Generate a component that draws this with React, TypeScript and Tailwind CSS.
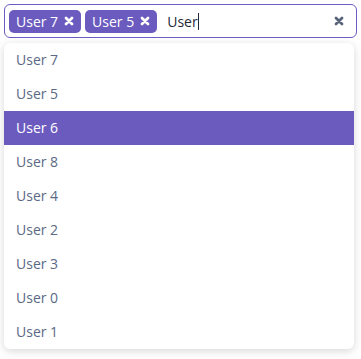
import { useState } from "react";

const options = ["User 7", "User 5", "User 6", "User 8", "User 4", "User 2", "User 3", "User 0", "User 1"];

function Cross({ className }: { className?: string }) {
  return (
    <svg className={className} viewBox="0 0 10 10" fill="none" stroke="currentColor" strokeWidth={2.8} strokeLinecap="round">
      <path d="M2 2l6 6M8 2l-6 6" />
    </svg>
  );
}

export default function App() {
  const [query] = useState("User");
  const selected = ["User 7", "User 5"];
  const active = "User 6";

  return (
    <div className="w-[361px] h-[359px] bg-white p-1 font-['Open_Sans',sans-serif] text-[14px]">
      <div className="flex items-center h-[34px] border border-[#6f5cc4] rounded-[6px] pl-1 pr-[12px] gap-1">
        {selected.map((s) => (
          <span key={s} className="flex items-center gap-[6px] h-[23px] pl-[7px] pr-[7px] rounded-[5px] bg-[#6c5bbf] text-white">
            {s}
            <Cross className="w-[10px] h-[10px]" />
          </span>
        ))}
        <span className="ml-[6px] flex-1 text-[#1f2937] flex items-center">
          {query}
          <span className="inline-block w-px h-[17px] bg-[#1f2937]" />
        </span>
        <Cross className="w-[10px] h-[10px] text-[#56637a]" />
      </div>
      <ul className="mt-[5px] w-[350px] rounded-[6px] bg-white shadow-[0_2px_8px_rgba(0,0,0,0.16)] overflow-hidden">
        {options.map((o) => (
          <li
            key={o}
            className={
              o === active
                ? "h-[34px] flex items-center pl-3 pb-[2px] bg-[#6c5bbf] text-white"
                : "h-[34px] flex items-center pl-3 pb-[2px] text-[#5a6985]"
            }
          >
            {o}
          </li>
        ))}
      </ul>
    </div>
  );
}
